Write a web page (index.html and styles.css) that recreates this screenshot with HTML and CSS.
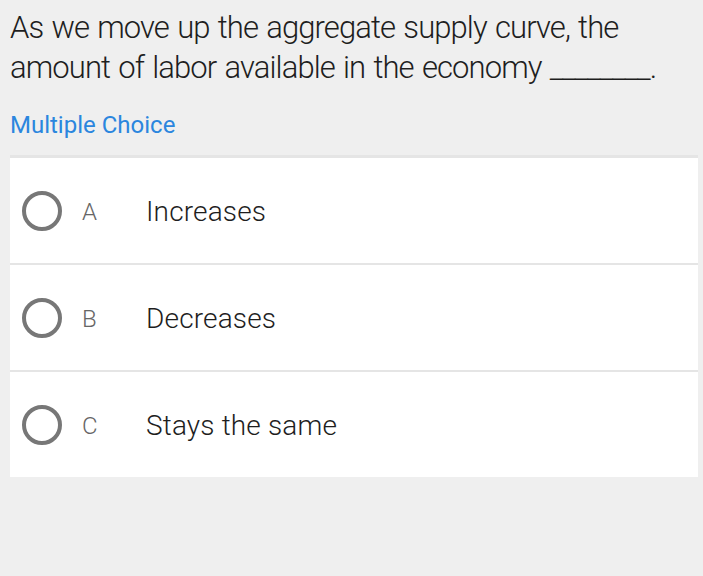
FILE: index.html
```html
<!DOCTYPE html>
<html>
<head>
<meta charset="utf-8">
<link rel="stylesheet" href="styles.css">
</head>
<body>
<div class="page">
  <p class="question">As we move up the aggregate supply curve, the amount of labor available in the economy ________.</p>
  <div class="type">Multiple Choice</div>
  <div class="options">
    <div class="option">
      <span class="radio"></span>
      <span class="letter">A</span>
      <span class="text">Increases</span>
    </div>
    <div class="option">
      <span class="radio"></span>
      <span class="letter">B</span>
      <span class="text">Decreases</span>
    </div>
    <div class="option">
      <span class="radio"></span>
      <span class="letter">C</span>
      <span class="text">Stays the same</span>
    </div>
  </div>
</div>
</body>
</html>
```
FILE: styles.css
```css
html, body {
  margin: 0;
  padding: 0;
  background: #efefef;
}
.page {
  padding: 8px 5px 0 10px;
  font-family: "Roboto", "Liberation Sans", sans-serif;
}
.question {
  margin: 0;
  font-size: 31px;
  line-height: 40px;
  font-weight: 300;
  color: #1e1e1e;
  letter-spacing: -0.9px;
  word-spacing: 1.5px;
  width: 690px;
}
.type {
  margin-top: 22px;
  font-size: 24px;
  line-height: 30px;
  color: #2b86de;
  letter-spacing: 0;
}
.options {
  margin-top: 15px;
  border-top: 3px solid #e5e5e5;
  width: 688px;
  display: flex;
  flex-direction: column;
  gap: 2px;
  background: #e5e5e5;
}
.option {
  background: #fff;
  height: 105px;
  display: flex;
  align-items: center;
}
.radio {
  width: 32px;
  height: 32px;
  border: 4px solid #777;
  border-radius: 50%;
  margin-left: 12px;
  flex: none;
}
.letter {
  margin-left: 20px;
  width: 64px;
  font-size: 24px;
  font-weight: 300;
  color: #666;
  padding-top: 2px;
}
.text {
  font-size: 28px;
  font-weight: 300;
  color: #1e1e1e;
  letter-spacing: 0.15px;
  padding-top: 2px;
}
```
